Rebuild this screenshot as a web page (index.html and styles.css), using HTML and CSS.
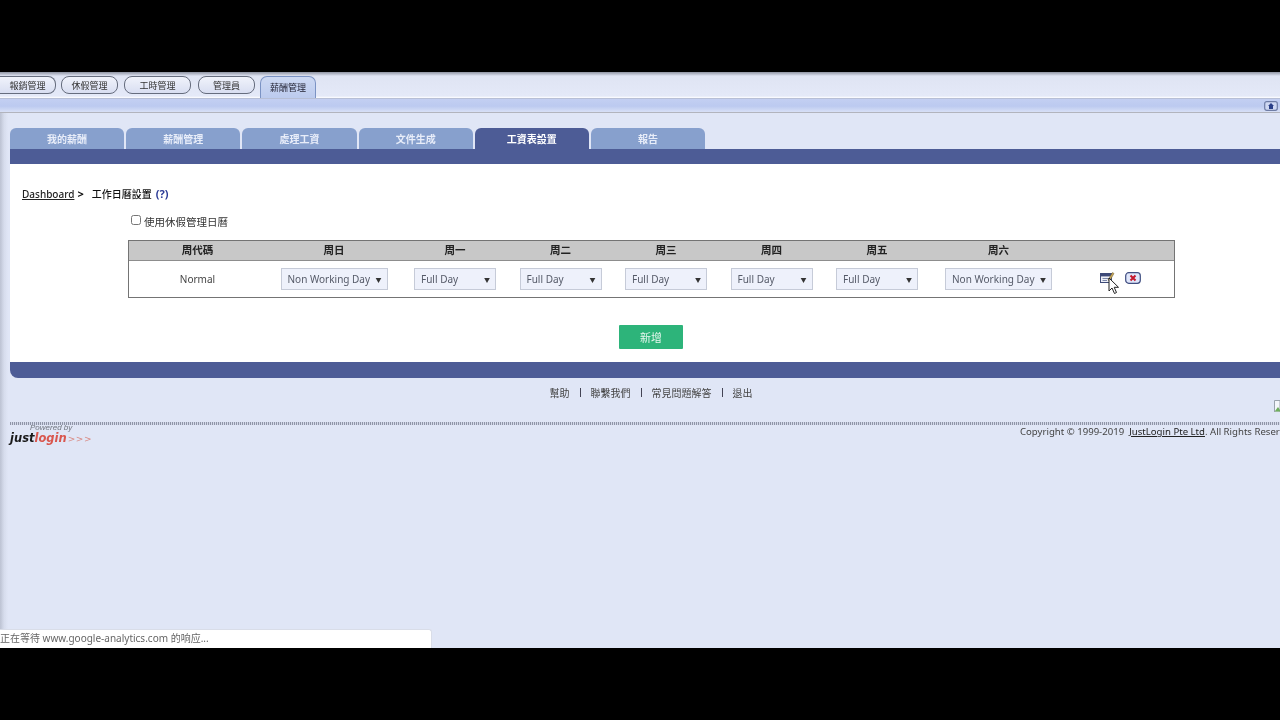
FILE: index.html
```html
<!DOCTYPE html>
<html lang="zh-Hant">
<head>
<meta charset="utf-8">
<title>工作日曆設置</title>
<link rel="stylesheet" href="styles.css">
</head>
<body>
<div class="letterbox"></div>
<main class="screen">
  <nav class="module-nav">
    <a class="module m1">報銷管理</a>
    <a class="module m2">休假管理</a>
    <a class="module m3">工時管理</a>
    <a class="module m4">管理員</a>
    <a class="module active">薪酬管理</a>
  </nav>
  <div class="subbar">
    <span class="home-btn"><svg viewBox="0 0 14 10" width="14" height="10"><rect x="0.7" y="0.7" width="12.6" height="8.6" rx="2" fill="#cfd8f2" stroke="#6f7da6" stroke-width="1.2"/><path d="M7 2 L10 5 H9 V8 H5 V5 H4 Z" fill="#2a3f88"/></svg></span>
  </div>
  <div class="tabs">
    <a class="tab">我的薪酬</a>
    <a class="tab">薪酬管理</a>
    <a class="tab">處理工資</a>
    <a class="tab">文件生成</a>
    <a class="tab current">工資表設置</a>
    <a class="tab">報告</a>
  </div>
  <section class="panel">
    <div class="band"></div>
    <div class="content">
      <div class="crumbs"><a class="crumb-link">Dashboard</a><b class="gt">&gt;</b><span class="crumb-title">工作日曆設置</span><b class="help">(?)</b></div>
      <label class="use-leave"><input type="checkbox" class="check"><span>使用休假管理日曆</span></label>
      <div class="table">
        <div class="thead">
          <div>周代碼</div><div>周日</div><div>周一</div><div>周二</div><div>周三</div><div>周四</div><div>周五</div><div>周六</div><div></div>
        </div>
        <div class="trow">
          <div class="code">Normal</div>
          <div><span class="select wide">Non Working Day<i>▼</i></span></div>
          <div><span class="select">Full Day<i>▼</i></span></div>
          <div><span class="select">Full Day<i>▼</i></span></div>
          <div><span class="select">Full Day<i>▼</i></span></div>
          <div><span class="select">Full Day<i>▼</i></span></div>
          <div><span class="select">Full Day<i>▼</i></span></div>
          <div><span class="select wide">Non Working Day<i>▼</i></span></div>
          <div class="actions">
            <svg class="edit" viewBox="0 0 15 14" width="15" height="14"><rect x="0.5" y="2.5" width="11" height="9" fill="#eef0f8" stroke="#3d4a78"/><rect x="1" y="3" width="10" height="2.4" fill="#3d4a78"/><path d="M2.5 7.5H9M2.5 9.5H7" stroke="#7d88aa"/><path d="M8 9 L12.5 1.5 L14 2.5 L9.6 10 Z" fill="#c9a85a" stroke="#6b5a2a" stroke-width="0.5"/></svg>
            <svg class="del" viewBox="0 0 16 12" width="16" height="12"><rect x="0.7" y="0.7" width="14.6" height="10.6" rx="3" fill="#dfe6fa" stroke="#3f4d80" stroke-width="1.2"/><path d="M5.5 3.5 L10.5 8.5 M10.5 3.5 L5.5 8.5" stroke="#c4182c" stroke-width="2"/></svg>
          </div>
        </div>
      </div>
      <div class="btn-row"><button class="add">新增</button></div>
    </div>
    <div class="band bottom"></div>
  </section>
  <div class="links">
    <a>幫助</a><s></s><a>聯繫我們</a><s></s><a>常見問題解答</a><s></s><a>退出</a>
  </div>
  <div class="broken"><svg viewBox="0 0 6 12" width="6" height="12"><path d="M0.5 0.5H6V12H0.5Z" fill="#f4f6fa" stroke="#9aa3ad"/><path d="M1 11L4 7L6 10V11.5H1Z" fill="#6fae5e"/></svg></div>
  <div class="dots"></div>
  <footer class="foot">
    <div class="logo">
      <span class="powered">Powered by</span>
      <span class="brand"><b class="just">just</b><b class="login">login</b><span class="arrows">&gt;&gt;&gt;</span></span>
    </div>
    <div class="copy">Copyright © 1999-2019 &nbsp;<u>JustLogin Pte Ltd</u>. All Rights Reserved.</div>
  </footer>
  <div class="status">正在等待 www.google-analytics.com 的响应...</div>
</main>
<div class="letterbox"></div>
<svg class="cursor" viewBox="0 0 12 18" width="12" height="18"><path d="M1 1 V14 L4 11 L6.5 16.5 L8.5 15.5 L6.2 10.3 H10.5 Z" fill="#fff" stroke="#222" stroke-width="1"/></svg>
</body>
</html>
```
FILE: styles.css
```css
* { box-sizing: border-box; }
html, body { margin: 0; height: 720px; overflow: hidden; background: #000; }
body {
  position: relative;
  font-family: "Noto Sans", "Noto Sans CJK TC", sans-serif;
  font-size: 10px;
  color: #222;
}
.letterbox { height: 72px; background: #000; }
.screen {
  position: relative;
  height: 576px;
  overflow: hidden;
  background: linear-gradient(90deg, #bcc2d2 0, #d6dcec 4px, #e0e6f6 8px);
  filter: blur(0.45px);
}
.module-nav {
  display: flex;
  align-items: flex-start;
  height: 26px;
  padding: 4px 0 0 0;
  background: linear-gradient(#8f94a2 0, #dfe4f3 4px, #e4e9f8 24px, #fff 26px);
}
.module {
  height: 18px;
  line-height: 17px;
  text-align: center;
  font-size: 9px;
  color: #333;
  background: linear-gradient(#f0f3fb, #d8def1);
  border: 1px solid #666d7e;
  border-radius: 8px;
}
.m1 { width: 56px; border-left: 0; border-radius: 0 8px 8px 0; }
.m2 { width: 57px; margin-left: 5px; }
.m3 { width: 67px; margin-left: 6px; }
.m4 { width: 57px; margin-left: 7px; }
.module.active {
  width: 56px;
  height: 22px;
  margin-left: 5px;
  line-height: 22px;
  background: linear-gradient(#cdd9f3, #bccbee);
  border: 1px solid #7b93c4;
  border-bottom: 0;
  border-radius: 7px 7px 0 0;
  color: #223;
}
.subbar {
  display: flex;
  justify-content: flex-end;
  align-items: center;
  height: 15px;
  padding-right: 2px;
  background: linear-gradient(#c3cff2, #bccaf0 55%, #d8e0f6);
  border-top: 1px solid #b7bfd6;
  border-bottom: 1px solid #b2b4bd;
}
.home-btn { display: flex; }
.tabs {
  display: flex;
  gap: 2px;
  margin: 15px 0 0 10px;
  height: 21px;
}
.tab {
  width: 114.2px;
  height: 21px;
  line-height: 22px;
  text-align: center;
  font-size: 10px;
  font-weight: 700;
  color: #e8edf9;
  background: #87a0cd;
  border-radius: 6px 6px 0 0;
}
.tab.current { background: #4d5c96; color: #fff; }
.panel { margin-left: 10px; }
.band { height: 15px; background: #4d5c96; }
.band.bottom { height: 16px; border-radius: 0 0 0 8px; }
.content { height: 198px; background: #fff; padding-top: 22px; }
.crumbs {
  display: flex;
  align-items: center;
  height: 15px;
  padding-left: 12px;
  font-size: 10px;
  color: #111;
}
.crumb-link { text-decoration: underline; font-weight: 500; color: #222; }
.gt { margin: 0 8px 0 3px; font-size: 11px; }
.crumb-title { font-weight: 500; }
.help { margin-left: 4px; color: #2a3a96; font-size: 11px; }
.use-leave {
  display: flex;
  align-items: center;
  height: 14px;
  margin: 13px 0 0 121px;
  color: #333;
  font-size: 10.5px;
}
.check {
  width: 10px;
  height: 10px;
  margin: 0 3px 2px 0;
  accent-color: #888;
}
.table {
  width: 1047px;
  height: 58px;
  margin: 12px 0 0 118px;
  border: 1px solid #747474;
}
.thead, .trow {
  display: grid;
  grid-template-columns: 137px 136px 106px 105px 106px 105px 106px 137px 107px;
  align-items: center;
  text-align: center;
}
.thead {
  height: 20px;
  padding-bottom: 2px;
  background: #c8c8c8;
  border-bottom: 1px solid #8d8d8d;
  font-weight: 700;
  font-size: 10.5px;
  color: #222;
}
.trow { height: 36px; }
.code { font-size: 10px; color: #444; }
.select {
  display: inline-flex;
  justify-content: space-between;
  align-items: center;
  width: 82px;
  height: 22px;
  padding: 0 5px 0 6px;
  font-size: 10px;
  color: #555a68;
  background: #eef1fb;
  border: 1px solid #c6cbd8;
}
.select.wide { width: 107px; }
.select i { font-style: normal; font-size: 6px; color: #333; }
.actions {
  display: flex;
  align-items: center;
  gap: 10px;
  padding: 0 0 3px 33px;
}
.btn-row { display: flex; margin: 27px 0 0 609px; }
.add {
  width: 64px;
  height: 24px;
  padding: 0;
  border: 0;
  border-radius: 1px;
  background: #2db47a;
  color: #e6f7ee;
  font-family: inherit;
  font-size: 11px;
}
.links {
  display: flex;
  justify-content: center;
  align-items: center;
  gap: 10px;
  height: 15px;
  margin-top: 7px;
  padding-left: 22px;
  font-size: 10px;
  color: #444;
}
.links s {
  width: 1px;
  height: 9px;
  background: #445;
}
.broken {
  display: flex;
  justify-content: flex-end;
  height: 12px;
  margin-top: 0;
}
.dots {
  height: 3px;
  margin: 10px 0 0 10px;
  background: repeating-linear-gradient(90deg, #8f95a8 0 1px, #d3d8e8 1px 2px);
}
.foot {
  display: flex;
  align-items: flex-start;
  padding-left: 10px;
}
.logo {
  flex: none;
  display: flex;
  flex-direction: column;
  width: 1010px;
  height: 20px;
}
.powered {
  height: 7px;
  margin-left: 20px;
  font-family: "Liberation Sans", sans-serif;
  font-size: 8px;
  line-height: 6px;
  font-style: italic;
  color: #70757f;
}
.brand {
  display: flex;
  align-items: baseline;
  height: 12px;
  line-height: 12px;
  font-family: "DejaVu Sans", sans-serif;
  font-size: 11.5px;
  font-style: italic;
}
.just { color: #1a1a1a; font-weight: 700; }
.login { color: #d9574f; }
.arrows { margin-left: 1px; font-size: 9px; letter-spacing: 0.6px; font-style: normal; color: #d98a84; }
.copy {
  flex: none;
  font-size: 9.6px;
  line-height: 13px;
  color: #444;
  white-space: nowrap;
}
.copy u { color: #222; }
.status {
  position: absolute;
  left: 0;
  bottom: 0;
  width: 432px;
  height: 19px;
  line-height: 17px;
  background: #fff;
  border-top: 1px solid #d9dde8;
  border-right: 1px solid #d9dde8;
  border-radius: 0 3px 0 0;
  font-size: 10px;
  color: #666;
}
.cursor {
  position: absolute;
  left: 1108px;
  top: 277px;
}
```
